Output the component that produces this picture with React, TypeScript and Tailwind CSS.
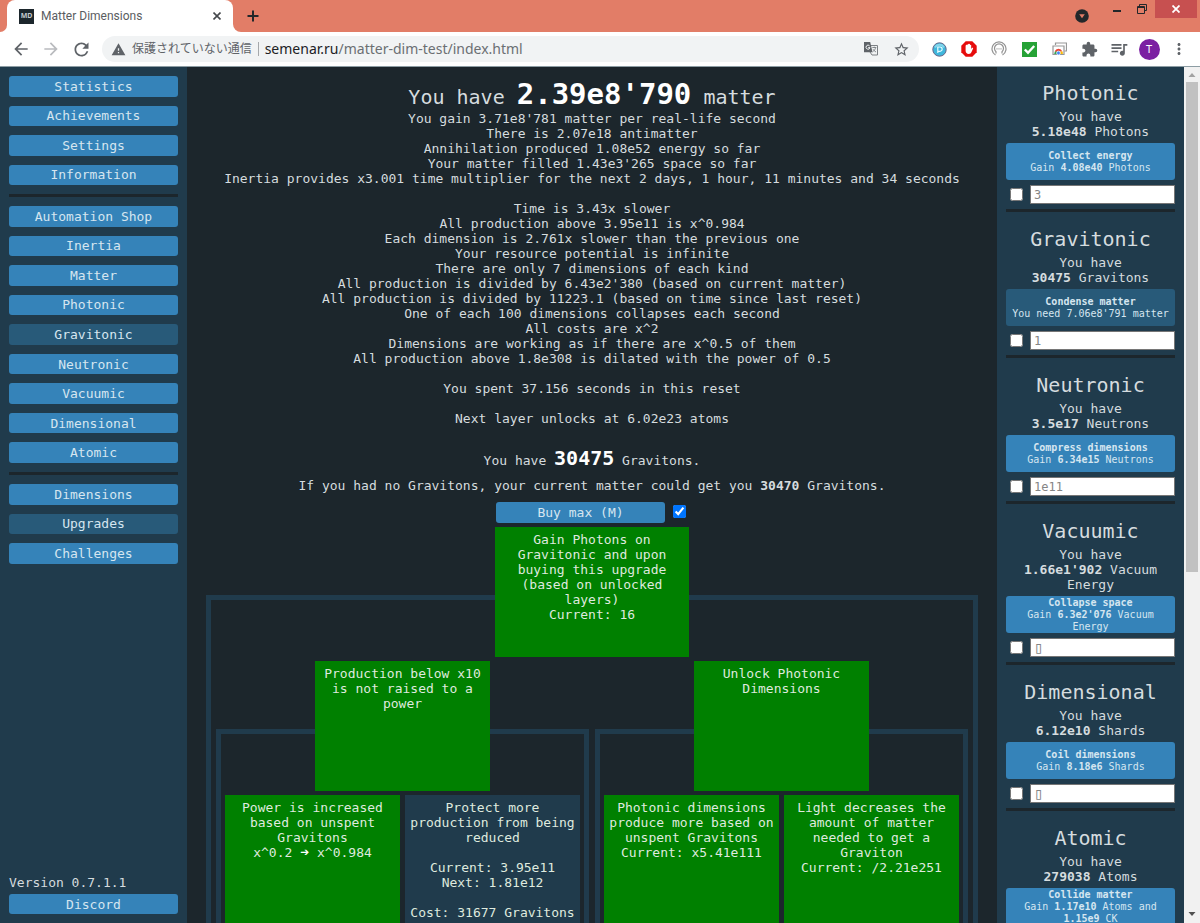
import type { ReactNode } from "react";
import {
  MdArrowBack,
  MdArrowForward,
  MdExtension,
  MdMoreVert,
  MdQueueMusic,
  MdRefresh,
  MdStarBorder,
  MdWarning,
} from "react-icons/md";

const navGroups = [
  { height: "h-[109px]", items: ["Statistics", "Achievements", "Settings", "Information"] },
  {
    height: "h-[257px]",
    items: [
      "Automation Shop",
      "Inertia",
      "Matter",
      "Photonic",
      "Gravitonic",
      "Neutronic",
      "Vacuumic",
      "Dimensional",
      "Atomic",
    ],
  },
  { height: "h-[80px]", items: ["Dimensions", "Upgrades", "Challenges"] },
];

const selected = ["Gravitonic", "Upgrades"];

const stats = [
  "You gain 3.71e8'781 matter per real-life second",
  "There is 2.07e18 antimatter",
  "Annihilation produced 1.08e52 energy so far",
  "Your matter filled 1.43e3'265 space so far",
  "Inertia provides x3.001 time multiplier for the next 2 days, 1 hour, 11 minutes and 34 seconds",
  "",
  "Time is 3.43x slower",
  "All production above 3.95e11 is x^0.984",
  "Each dimension is 2.761x slower than the previous one",
  "Your resource potential is infinite",
  "There are only 7 dimensions of each kind",
  "All production is divided by 6.43e2'380 (based on current matter)",
  "All production is divided by 11223.1 (based on time since last reset)",
  "One of each 100 dimensions collapses each second",
  "All costs are x^2",
  "Dimensions are working as if there are x^0.5 of them",
  "All production above 1.8e308 is dilated with the power of 0.5",
  "",
  "You spent 37.156 seconds in this reset",
  "",
  "Next layer unlocks at 6.02e23 atoms",
];

type Layer = {
  name: string;
  amount: string;
  unit: string[];
  action: string;
  detail: ReactNode;
  value: string;
  dim?: boolean;
};

const layers: Layer[] = [
  {
    name: "Photonic",
    amount: "5.18e48",
    unit: ["Photons"],
    action: "Collect energy",
    detail: <>Gain <b>4.08e40</b> Photons</>,
    value: "3",
  },
  {
    name: "Gravitonic",
    amount: "30475",
    unit: ["Gravitons"],
    action: "Condense matter",
    detail: <>You need 7.06e8'791 matter</>,
    value: "1",
    dim: true,
  },
  {
    name: "Neutronic",
    amount: "3.5e17",
    unit: ["Neutrons"],
    action: "Compress dimensions",
    detail: <>Gain <b>6.34e15</b> Neutrons</>,
    value: "1e11",
  },
  {
    name: "Vacuumic",
    amount: "1.66e1'902",
    unit: ["Vacuum", "Energy"],
    action: "Collapse space",
    detail: <>Gain <b>6.3e2'076</b> Vacuum<br />Energy</>,
    value: "▯",
  },
  {
    name: "Dimensional",
    amount: "6.12e10",
    unit: ["Shards"],
    action: "Coil dimensions",
    detail: <>Gain <b>8.18e6</b> Shards</>,
    value: "▯",
  },
  {
    name: "Atomic",
    amount: "279038",
    unit: ["Atoms"],
    action: "Collide matter",
    detail: <>Gain <b>1.17e10</b> Atoms and<br /><b>1.15e9</b> CK</>,
    value: "1",
  },
];

function TabStrip() {
  return (
    <div className="flex h-8 shrink-0 bg-white">
      <div className="w-[7px] rounded-br-lg bg-[#e27d67]" />
      <div className="bg-[#e27d67]">
        <div className="flex h-full w-[226px] items-center rounded-t-lg bg-white pr-2 pl-3">
          <span className="flex h-[15px] w-[15px] items-center justify-center bg-[#1c262c] text-[7px] font-bold text-[#c5cbce]">
            MD
          </span>
          <span className="ml-[7px] flex-1 font-[Roboto,sans-serif] text-xs text-[#5a5d61]">Matter Dimensions</span>
          <button aria-label="Close tab" className="flex h-4 w-4 items-center justify-center">
            <svg width="8" height="8" viewBox="0 0 8 8" stroke="#45484c" strokeWidth="1.6">
              <path d="M.5 .5 7.5 7.5M7.5 .5 .5 7.5" />
            </svg>
          </button>
        </div>
      </div>
      <div className="flex flex-1 items-start rounded-bl-lg bg-[#e27d67]">
        <button aria-label="New tab" className="ml-[14px] flex h-8 w-3 items-center justify-center">
          <svg width="12" height="12" viewBox="0 0 12 12" stroke="#23272a" strokeWidth="2">
            <path d="M6 .5V11.5M.5 6H11.5" />
          </svg>
        </button>
        <div className="flex-1" />
        <button aria-label="Search tabs" className="mt-[9px] mr-6">
          <svg width="14" height="14" viewBox="0 0 14 14">
            <circle cx="7" cy="7" r="6.8" fill="#23272a" />
            <path d="M4.2 5.2h5.6L7 9.2z" fill="#e27d67" />
          </svg>
        </button>
        <button aria-label="Minimize" className="mt-2.5 mr-4">
          <svg width="8" height="3" viewBox="0 0 8 3">
            <path d="M0 0h8v2H0z" fill="#23272a" />
          </svg>
        </button>
        <button aria-label="Restore" className="mt-1 mr-2">
          <svg width="10" height="10" viewBox="0 0 10 10" fill="none" stroke="#23272a">
            <path d="M2.5 2.5V.5h7v6h-2" />
            <path d="M.5 2.5h7v7h-7zM.5 3.5h7" />
          </svg>
        </button>
        <button aria-label="Close window" className="mr-[3px] flex h-[18px] w-[42px] items-center justify-center bg-[#c75050]">
          <svg width="8" height="8" viewBox="0 0 8 8" stroke="#fff" strokeWidth="1.8">
            <path d="M.5 .5 7.5 7.5M7.5 .5 .5 7.5" />
          </svg>
        </button>
      </div>
    </div>
  );
}

function ToolIcon({ label, children }: { label: string; children: ReactNode }) {
  return (
    <button aria-label={label} className="flex h-7 w-[30px] shrink-0 items-center justify-center text-[#5f6368]">
      {children}
    </button>
  );
}

function Toolbar() {
  return (
    <div className="flex h-[35px] shrink-0 items-center border-b border-[#8d9da4] bg-white px-1.5">
      <ToolIcon label="Back"><MdArrowBack size={20} /></ToolIcon>
      <ToolIcon label="Forward"><MdArrowForward size={20} color="#b9bbbe" /></ToolIcon>
      <ToolIcon label="Reload"><MdRefresh size={21} /></ToolIcon>
      <div className="ml-1.5 flex h-[26px] flex-1 items-center rounded-full bg-[#f1f3f4] pr-[3px] pl-[9px]">
        <MdWarning size={15} color="#5f6368" />
        <span className="ml-1.5 text-xs whitespace-nowrap text-[#5f6368]">保護されていない通信</span>
        <span className="mx-1.5 h-[14px] w-px bg-[#a5a8ab]" />
        <a href="#top" className="flex-1 text-sm whitespace-nowrap text-[#6b6f73]">
          <span className="text-[#202124]">semenar.ru</span>/matter-dim-test/index.html
        </a>
        <ToolIcon label="Translate">
          <svg width="14" height="14" viewBox="0 0 14 14" fill="none">
            <path d="M6 3.5h7.5v9.5H8L6 10" fill="#f1f3f4" stroke="#7c8084" />
            <path d="M8.3 5.5h4M10.3 4.7v.8M11.6 5.5c-.3 2-1.5 3.4-3 4.3M9 7.2c.7 1.2 1.7 2.1 3 2.8" stroke="#7c8084" strokeWidth=".9" />
            <path d="M0 0h6.2l2.3 10.3H0z" fill="#5f6368" />
            <path d="M5.6 3.9A2 2 0 1 0 6 5.6H4.2" stroke="#f1f3f4" strokeWidth="1" />
          </svg>
        </ToolIcon>
        <ToolIcon label="Bookmark"><MdStarBorder size={17} /></ToolIcon>
      </div>
      <div className="ml-[5px] flex">
        <ToolIcon label="Lookup">
          <svg width="15" height="15" viewBox="0 0 15 15">
            <circle cx="7.5" cy="7.5" r="6.7" fill="#3fb7dc" stroke="#668" strokeWidth="1" />
            <path d="M3 5.5a5 5 0 0 1 9 0" stroke="#82d6ec" strokeWidth="2" fill="none" />
            <path d="M5.8 11V5h2.2a2 2 0 0 1 0 4.3H5.8" stroke="#e8fbff" strokeWidth="1.2" fill="none" />
          </svg>
        </ToolIcon>
        <ToolIcon label="Content blocker">
          <svg width="16" height="16" viewBox="0 0 16 16">
            <path d="M4.7.3h6.6l4.4 4.4v6.6l-4.4 4.4H4.7L.3 11.3V4.7z" fill="#e60c0c" />
            <path d="M4.6 5.2v4.6c0 2 1.2 3.2 3.1 3.2 1.5 0 2.3-.8 2.8-2l1.6-3.4c.3-.9-.7-1.3-1.2-.5l-.7 1V4.3c0-.9-1.2-.9-1.2 0v-.8c0-.9-1.2-.9-1.2 0v-.2c0-.9-1.2-.9-1.2 0v1c0-.9-2-.9-2 .9z" fill="#fff" />
          </svg>
        </ToolIcon>
        <ToolIcon label="Assistant">
          <svg width="16" height="16" viewBox="0 0 16 16" fill="none" stroke="#929292">
            <path d="M4.5 14A7 7 0 1 1 11.5 14" strokeWidth="1.2" />
            <path d="M5 12.5V10.7A4.5 4.5 0 1 1 11 10.7V12.5" strokeWidth="1.2" />
            <path d="M5.5 7.8h5" strokeWidth="1.2" strokeDasharray="1 1" />
          </svg>
        </ToolIcon>
        <ToolIcon label="Checker">
          <svg width="15" height="15" viewBox="0 0 15 15">
            <path d="M0 0h15v15H0z" fill="#26a236" />
            <path d="M2.8 7.5 6 10.7 12.2 4" stroke="#fff" strokeWidth="2.4" fill="none" />
          </svg>
        </ToolIcon>
        <ToolIcon label="Windows">
          <svg width="15" height="14" viewBox="0 0 15 14" fill="none">
            <path d="M3.5 3V1h11v8h-2" stroke="#979797" strokeWidth="1.2" />
            <path d="M1 4h11v8.5H1z" fill="#fff" stroke="#979797" strokeWidth="1.2" />
            <path d="M2.2 12a4.2 4.2 0 0 1 2-3.5L6.5 12" fill="#33a652" />
            <path d="M2.6 9.5a4.2 4.2 0 0 1 7.8 0H6.5z" fill="#e94335" />
            <path d="M6.5 9.5h4A4.2 4.2 0 0 1 10.8 12H6.5z" fill="#fbbc05" />
            <circle cx="6.5" cy="11" r="1.9" fill="#4285f4" stroke="#fff" strokeWidth=".7" />
          </svg>
        </ToolIcon>
        <ToolIcon label="Extensions"><MdExtension size={17} /></ToolIcon>
        <ToolIcon label="Media controls"><MdQueueMusic size={20} /></ToolIcon>
        <ToolIcon label="Profile">
          <span className="flex h-[21px] w-[21px] items-center justify-center rounded-full bg-[#7b1fa2] text-[11px] text-white">T</span>
        </ToolIcon>
        <ToolIcon label="Menu"><MdMoreVert size={18} /></ToolIcon>
      </div>
    </div>
  );
}

function NavButton({ label }: { label: string }) {
  const tone = selected.includes(label) ? "bg-[#285a79]" : "bg-[#3583b9]";
  return (
    <button className={`flex items-center justify-center rounded-[3px] text-[#d6e6f0] ${tone}`}>{label}</button>
  );
}

function Divider() {
  return <hr className="h-[3px] border-0 bg-[#1c262c]" />;
}

function LeftBar() {
  return (
    <nav className="flex w-[187px] shrink-0 flex-col bg-[#203b4c] px-[9px] py-[9px]">
      <div className="flex flex-col gap-[9px]">
        {navGroups.map((group, i) => (
          <div key={group.height} className="flex flex-col gap-[9px]">
            {i > 0 && <Divider />}
            <div className={`grid auto-rows-fr gap-[9px] ${group.height}`}>
              {group.items.map((item) => (
                <NavButton key={item} label={item} />
              ))}
            </div>
          </div>
        ))}
      </div>
      <div className="mt-auto text-[#d5dcdf]">Version 0.7.1.1</div>
      <a href="#discord" className="mt-1 flex h-5 items-center justify-center rounded-[3px] bg-[#3583b9] text-[#d6e6f0]">
        Discord
      </a>
    </nav>
  );
}

function Node({ children, wide, locked }: { children: ReactNode; wide?: boolean; locked?: boolean }) {
  return (
    <button
      className={`relative z-10 flex min-h-[130px] shrink-0 flex-col items-center p-[5px] text-[#dfeadf] ${
        wide ? "w-[194px] px-4" : "w-[175px]"
      } ${locked ? "bg-[#203b4c]" : "bg-[#008000]"}`}
    >
      <span>{children}</span>
    </button>
  );
}

function Branch({ node, gap, children }: { node: ReactNode; gap: string; children: ReactNode }) {
  return (
    <div className="flex flex-col items-center">
      {node}
      <div className={`-mt-[62px] flex border-[5px] border-[#203b4c] pt-[61px] ${gap}`}>{children}</div>
    </div>
  );
}

function UpgradeTree() {
  return (
    <Branch
      gap="gap-1.5 px-[5px]"
      node={
        <Node wide>
          Gain Photons on Gravitonic and upon buying this upgrade (based on unlocked layers)
          <br />
          Current: 16
        </Node>
      }
    >
      <Branch gap="gap-[5px] px-1 pb-1" node={<Node>Production below x10 is not raised to a power</Node>}>
        <Node>
          Power is increased based on unspent Gravitons
          <br />
          x^0.2 <b className="text-[15px] leading-[10px] text-white">➔</b> x^0.984
        </Node>
        <Node locked>
          Protect more
          <br />
          production from being reduced
          <br />
          <br />
          Current: 3.95e11
          <br />
          Next: 1.81e12
          <br />
          <br />
          Cost: 31677 Gravitons
        </Node>
      </Branch>
      <Branch gap="gap-[5px] px-1 pb-1" node={<Node>Unlock Photonic Dimensions</Node>}>
        <Node>
          Photonic dimensions produce more based on unspent Gravitons
          <br />
          Current: x5.41e111
        </Node>
        <Node>
          Light decreases the amount of matter needed to get a Graviton
          <br />
          Current: /2.21e251
        </Node>
      </Branch>
    </Branch>
  );
}

function MainPanel() {
  return (
    <main className="flex min-w-0 flex-1 flex-col items-center overflow-hidden pt-2.5 text-center">
      <h1 className="h-[34px] shrink-0 text-xl leading-5 whitespace-nowrap">
        You have <b className="text-[29px] leading-[35px] text-white">2.39e8'790</b> matter
      </h1>
      <div className="shrink-0">
        {stats.map((line, i) => (
          <p key={i} className="min-h-[15px]">{line}</p>
        ))}
      </div>
      <p className="mt-[22px] h-5 shrink-0">
        You have <b className="text-xl leading-5 text-white">30475</b> Gravitons.
      </p>
      <p className="mt-2.5 shrink-0">
        If you had no Gravitons, your current matter could get you <b>30470</b> Gravitons.
      </p>
      <div className="mt-[9px] flex shrink-0 gap-2 pr-0.5">
        <button className="h-[21px] w-[169px] rounded-[3px] bg-[#3583b9] text-[#d6e6f0]">Buy max (M)</button>
        <input type="checkbox" defaultChecked aria-label="Buy max automatically" className="mt-[3px] h-[13px] w-[13px]" />
      </div>
      <div className="mt-1 shrink-0">
        <UpgradeTree />
      </div>
    </main>
  );
}

function LayerCard({ layer, last }: { layer: Layer; last: boolean }) {
  return (
    <section className="flex shrink-0 flex-col pt-[15px] text-center first:pt-[14px]">
      <h2 className="text-xl leading-6">{layer.name}</h2>
      <p className="mt-1">
        You have
        <br />
        <b>{layer.amount}</b> {layer.unit[0]}
        {layer.unit[1] && (
          <>
            <br />
            {layer.unit[1]}
          </>
        )}
      </p>
      <button
        className={`mt-1 flex h-[37px] flex-col items-center justify-center rounded-[3px] text-[10px] leading-3 whitespace-nowrap text-[#d6e6f0] ${
          layer.dim ? "bg-[#285a79]" : "bg-[#3583b9]"
        }`}
      >
        <b>{layer.action}</b>
        <span>{layer.detail}</span>
      </button>
      <div className="mt-[5px] flex items-center pl-1">
        <input type="checkbox" aria-label={`Automate ${layer.name}`} className="h-[13px] w-[13px]" />
        <input
          type="text"
          aria-label={`${layer.name} threshold`}
          defaultValue={layer.value}
          className={`ml-[7px] h-[19px] min-w-0 flex-1 border border-[#767676] bg-white px-[3px] text-[#858585] ${
            layer.value === "▯" ? "text-base" : "text-xs"
          }`}
        />
      </div>
      {!last && (
        <div className="mt-[5px]">
          <Divider />
        </div>
      )}
    </section>
  );
}

function RightBar() {
  return (
    <aside className="flex w-[187px] shrink-0 flex-col overflow-hidden bg-[#203b4c] px-[9px]">
      {layers.map((layer, i) => (
        <LayerCard key={layer.name} layer={layer} last={i === layers.length - 1} />
      ))}
    </aside>
  );
}

function ScrollTrack() {
  return (
    <div className="flex w-4 shrink-0 flex-col items-center bg-[#f1f1f1]">
      <svg width="16" height="15" viewBox="0 0 16 15">
        <path d="M4.5 10 8 6l3.5 4z" fill="#a3a3a3" />
      </svg>
      <div className="h-[490px] w-3 bg-[#c1c1c1]" />
      <svg className="mt-auto" width="16" height="17" viewBox="0 0 16 17">
        <path d="M4.5 6 8 10l3.5-4z" fill="#505050" />
      </svg>
    </div>
  );
}

export default function App() {
  return (
    <div className="flex h-screen flex-col overflow-hidden">
      <header className="shrink-0 font-['Noto_Sans','Noto_Sans_CJK_JP',sans-serif]">
        <TabStrip />
        <Toolbar />
      </header>
      <div className="flex min-h-0 flex-1 bg-[#1c262c] font-['DejaVu_Sans_Mono',monospace] text-[13px] leading-[15px] text-[#d5dcdf]">
        <LeftBar />
        <MainPanel />
        <RightBar />
        <ScrollTrack />
      </div>
    </div>
  );
}
